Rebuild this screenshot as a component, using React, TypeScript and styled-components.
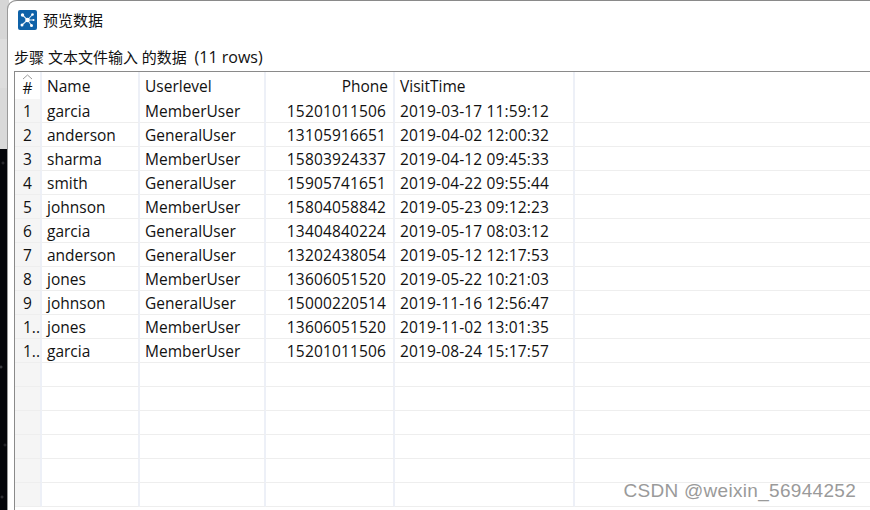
import React from 'react';
import styled, { createGlobalStyle } from 'styled-components';

const GlobalStyle = createGlobalStyle`
  html, body {
    margin: 0;
    padding: 0;
    width: 870px;
    height: 510px;
    overflow: hidden;
    background: #fff;
  }
`;

const Screen = styled.div`
  position: relative;
  display: flex;
  width: 870px;
  height: 510px;
  overflow: hidden;
  font-family: "Open Sans", "Noto Sans CJK SC", sans-serif;
  color: #111;
`;

// the desktop that is visible left of the window
const Backdrop = styled.div`
  display: flex;
  flex-direction: column;
  flex: 0 0 9px;
`;

const BackdropBand = styled.div<{ $h: number; $bg: string }>`
  height: ${p => p.$h}px;
  flex: ${p => (p.$h ? 'none' : 1)};
  background: ${p => p.$bg};
`;

const Window = styled.div`
  flex: 1;
  display: flex;
  flex-direction: column;
  min-width: 0;
  background: #fff;
  border-top: 1px solid #8a8a8a;
  border-top-left-radius: 9px;
  margin-left: -1px;
  box-shadow: -1px 0 0 #9a9a9a;
`;

const TitleBar = styled.div`
  display: flex;
  align-items: center;
  gap: 6px;
  height: 37px;
  padding-left: 10px;
  flex: none;
`;

const TitleText = styled.span`
  font-size: 15px;
  font-family: "Noto Sans CJK SC", sans-serif;
`;

const Caption = styled.div`
  height: 33px;
  flex: none;
  display: flex;
  align-items: center;
  padding-left: 6px;
  padding-top: 4px;
  box-sizing: border-box;
  font-size: 15px;
  white-space: pre;
`;

const RowCount = styled.span`
  font-size: 16px;
`;

const TableBox = styled.div`
  flex: 1;
  margin-left: 6px;
  border-top: 1px solid #8a8a8a;
  border-left: 1px solid #8a8a8a;
  overflow: hidden;
`;

const Grid = styled.table`
  border-collapse: separate;
  border-spacing: 0;
  table-layout: fixed;
  width: 855px;
  font-size: 15.5px;
`;

const HeadCell = styled.th<{ $right?: boolean }>`
  position: relative;
  height: 27px;
  padding: 1px 5px 0 5px;
  box-sizing: border-box;
  font-weight: 400;
  text-align: ${p => (p.$right ? 'right' : 'left')};
  border-right: 2px solid #edf0f7;
  white-space: nowrap;
  overflow: hidden;
  &:last-child { border-right: none; }
`;

const IndexHead = styled(HeadCell)`
  text-align: center;
  padding: 5px 0 0;
`;

const SortCaret = styled.svg`
  position: absolute;
  top: 2px;
  left: 7px;
`;

const Cell = styled.td<{ $right?: boolean; $num?: boolean }>`
  height: 24px;
  padding: 0 7px 0 5px;
  box-sizing: border-box;
  text-align: ${p => (p.$right ? 'right' : 'left')};
  letter-spacing: ${p => (p.$num ? '0.15px' : 'normal')};
  border-right: 2px solid #edf0f7;
  border-bottom: 1px solid #eeeeee;
  white-space: nowrap;
  overflow: hidden;
  &:last-child { border-right: none; }
`;

const IndexCell = styled(Cell)`
  background: #f5f5f5;
  padding: 0 0 0 8px;
`;

const Watermark = styled.div`
  position: absolute;
  right: 14px;
  top: 480px;
  font-family: "Liberation Sans", Arial, sans-serif;
  font-size: 19px;
  letter-spacing: 0.3px;
  color: #9a9a9a;
`;

const rows = [
  ['1', 'garcia', 'MemberUser', '15201011506', '2019-03-17 11:59:12'],
  ['2', 'anderson', 'GeneralUser', '13105916651', '2019-04-02 12:00:32'],
  ['3', 'sharma', 'MemberUser', '15803924337', '2019-04-12 09:45:33'],
  ['4', 'smith', 'GeneralUser', '15905741651', '2019-04-22 09:55:44'],
  ['5', 'johnson', 'MemberUser', '15804058842', '2019-05-23 09:12:23'],
  ['6', 'garcia', 'GeneralUser', '13404840224', '2019-05-17 08:03:12'],
  ['7', 'anderson', 'GeneralUser', '13202438054', '2019-05-12 12:17:53'],
  ['8', 'jones', 'MemberUser', '13606051520', '2019-05-22 10:21:03'],
  ['9', 'johnson', 'GeneralUser', '15000220514', '2019-11-16 12:56:47'],
  ['1..', 'jones', 'MemberUser', '13606051520', '2019-11-02 13:01:35'],
  ['1..', 'garcia', 'MemberUser', '15201011506', '2019-08-24 15:17:57'],
  ['', '', '', '', ''],
  ['', '', '', '', ''],
  ['', '', '', '', ''],
  ['', '', '', '', ''],
  ['', '', '', '', ''],
  ['', '', '', '', ''],
];

const speckles = [
  'radial-gradient(circle at 3px 14px, #3c3c40 0, transparent 2px)',
  'radial-gradient(circle at 1px 218px, #55555a 0, transparent 2px)',
  'radial-gradient(circle at 5px 296px, #333338 0, transparent 2px)',
  'radial-gradient(circle at 2px 348px, #44444a 0, transparent 2px)',
].join(', ');

const AppIcon = () => (
  <svg width="19" height="20" viewBox="0 0 19 20">
    <rect width="19" height="20" rx="2" fill="#0f62a8" />
    <g stroke="#dbe9f5" strokeWidth="1.1">
      <path d="M9.5 10L4.5 5M9.5 10L14.5 4.5M9.5 10L4 15M9.5 10L13.5 15.5M9.5 10H15.5" />
    </g>
    <g fill="#fff">
      <circle cx="9.5" cy="10" r="2.3" />
      <circle cx="4.5" cy="5" r="1.7" />
      <circle cx="14.5" cy="4.5" r="1.3" />
      <circle cx="4" cy="15" r="1.5" />
      <circle cx="13.5" cy="15.5" r="1.5" />
      <circle cx="15.5" cy="10" r="1" />
    </g>
  </svg>
);

export default function App() {
  return (
    <Screen>
      <GlobalStyle />
      <Backdrop>
        <BackdropBand $h={39} $bg="#d6d6d6" />
        <BackdropBand $h={49} $bg="#dddddd" />
        <BackdropBand $h={61} $bg="#d9d9d9" />
        <BackdropBand $h={0} $bg={`${speckles}, #05060a`} />
      </Backdrop>
      <Window>
        <TitleBar>
          <AppIcon />
          <TitleText>预览数据</TitleText>
        </TitleBar>
        <Caption>
          步骤 文本文件输入 的数据  <RowCount>(11 rows)</RowCount>
        </Caption>
        <TableBox>
          <Grid>
            <colgroup>
              <col style={{ width: 27 }} />
              <col style={{ width: 98 }} />
              <col style={{ width: 126 }} />
              <col style={{ width: 129 }} />
              <col style={{ width: 180 }} />
              <col />
            </colgroup>
            <thead>
              <tr>
                <IndexHead>
                  <SortCaret width="11" height="6" viewBox="0 0 11 6">
                    <path d="M1 5L5.5 1L10 5" fill="none" stroke="#9a9a9a" />
                  </SortCaret>
                  #
                </IndexHead>
                <HeadCell>Name</HeadCell>
                <HeadCell>Userlevel</HeadCell>
                <HeadCell $right>Phone</HeadCell>
                <HeadCell>VisitTime</HeadCell>
                <HeadCell />
              </tr>
            </thead>
            <tbody>
              {rows.map((r, i) => (
                <tr key={i}>
                  <IndexCell>{r[0]}</IndexCell>
                  <Cell>{r[1]}</Cell>
                  <Cell>{r[2]}</Cell>
                  <Cell $right $num>{r[3]}</Cell>
                  <Cell $num>{r[4]}</Cell>
                  <Cell />
                </tr>
              ))}
            </tbody>
          </Grid>
        </TableBox>
      </Window>
      <Watermark>CSDN @weixin_56944252</Watermark>
    </Screen>
  );
}
